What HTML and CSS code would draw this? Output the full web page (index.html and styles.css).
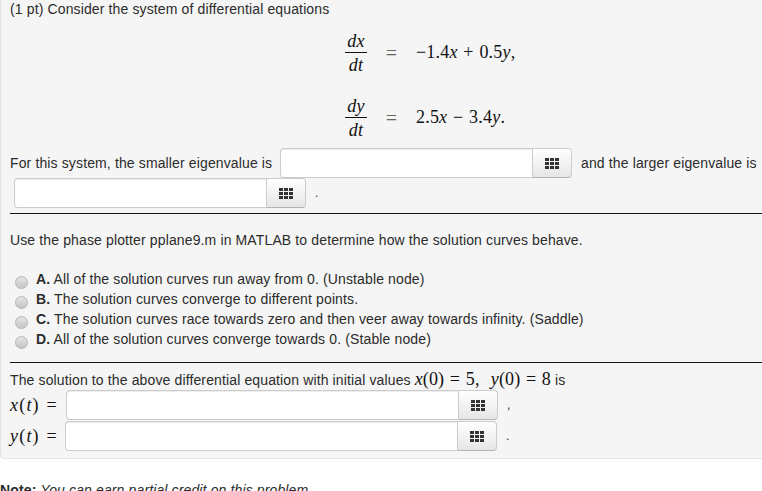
FILE: index.html
```html
<!DOCTYPE html>
<html lang="en">
<head>
    <meta charset="UTF-8">
    <meta name="viewport" content="width=device-width, initial-scale=1.0">
    <title>Problem</title>
    <link rel="stylesheet" href="styles.css">
</head>
<body>
    <div class="problem">
        <div class="line intro">(1 pt) Consider the system of differential equations</div>

        <div class="equations">
            <div class="frac"><span class="num"><i>dx</i></span><span class="den"><i>dt</i></span></div>
            <div class="eq-sign">=</div>
            <div class="eq-rhs">&minus;1.4<i>x</i> + 0.5<i>y</i>,</div>
            <div class="frac"><span class="num"><i>dy</i></span><span class="den"><i>dt</i></span></div>
            <div class="eq-sign">=</div>
            <div class="eq-rhs">2.5<i>x</i> &minus; 3.4<i>y</i>.</div>
        </div>

        <div class="answer-row first-row">
            <span class="answer-label">For this system, the smaller eigenvalue is</span>
            <div class="answer">
                <input type="text">
                <button class="picker"><svg width="14" height="11" viewBox="0 0 14 11"><path d="M0 0h4v3H0zM5 0h4v3H5zM10 0h4v3h-4zM0 4h4v3H0zM5 4h4v3H5zM10 4h4v3h-4zM0 8h4v3H0zM5 8h4v3H5zM10 8h4v3h-4z" fill="#333"/></svg></button>
            </div>
            <span class="after-first">and the larger eigenvalue is</span>
        </div>
        <div class="answer-row second-row">
            <div class="answer">
                <input type="text">
                <button class="picker"><svg width="14" height="11" viewBox="0 0 14 11"><path d="M0 0h4v3H0zM5 0h4v3H5zM10 0h4v3h-4zM0 4h4v3H0zM5 4h4v3H5zM10 4h4v3h-4zM0 8h4v3H0zM5 8h4v3H5zM10 8h4v3h-4z" fill="#333"/></svg></button>
            </div>
            <span class="tail">.</span>
        </div>

        <hr class="rule rule-top">

        <div class="line plotter">Use the phase plotter pplane9.m in MATLAB to determine how the solution curves behave.</div>

        <div class="choices">
            <label class="choice"><input type="radio" name="behave"><span><b>A.</b> All of the solution curves run away from 0. (Unstable node)</span></label>
            <label class="choice"><input type="radio" name="behave"><span><b>B.</b> The solution curves converge to different points.</span></label>
            <label class="choice"><input type="radio" name="behave"><span><b>C.</b> The solution curves race towards zero and then veer away towards infinity. (Saddle)</span></label>
            <label class="choice"><input type="radio" name="behave"><span><b>D.</b> All of the solution curves converge towards 0. (Stable node)</span></label>
        </div>

        <hr class="rule rule-bottom">

        <div class="line solution">The solution to the above differential equation with initial values <span class="math"><i>x</i>(0) = 5, &nbsp;<i>y</i>(0) = 8</span> is</div>

        <div class="answer-row sol-x">
            <span class="math sol-label"><i>x</i>(<i>t</i>) =</span>
            <div class="answer sol">
                <input type="text">
                <button class="picker"><svg width="14" height="11" viewBox="0 0 14 11"><path d="M0 0h4v3H0zM5 0h4v3H5zM10 0h4v3h-4zM0 4h4v3H0zM5 4h4v3H5zM10 4h4v3h-4zM0 8h4v3H0zM5 8h4v3H5zM10 8h4v3h-4z" fill="#333"/></svg></button>
            </div>
            <span class="tail">,</span>
        </div>
        <div class="answer-row sol-y">
            <span class="math sol-label"><i>y</i>(<i>t</i>) =</span>
            <div class="answer sol">
                <input type="text">
                <button class="picker"><svg width="14" height="11" viewBox="0 0 14 11"><path d="M0 0h4v3H0zM5 0h4v3H5zM10 0h4v3h-4zM0 4h4v3H0zM5 4h4v3H5zM10 4h4v3h-4zM0 8h4v3H0zM5 8h4v3H5zM10 8h4v3h-4z" fill="#333"/></svg></button>
            </div>
            <span class="tail">.</span>
        </div>
    </div>

    <p class="note"><b>Note:</b> <i>You can earn partial credit on this problem.</i></p>
</body>
</html>
```

FILE: styles.css
```css
* {
    margin: 0;
    padding: 0;
    box-sizing: border-box;
}

html, body {
    height: 100vh;
    overflow: hidden;
}

body {
    background-color: #fff;
    color: #2b2b2b;
    font-family: "Liberation Sans", Arial, sans-serif;
    font-size: 14px;
    line-height: 20px;
    letter-spacing: 0.13px;
}

.problem {
    height: 460px;
    padding-left: 10px;
    background-color: #f5f5f5;
    border-left: 1px solid #e3e3e3;
    border-bottom: 1px solid #e3e3e3;
    border-bottom-left-radius: 4px;
}

.line {
    margin-left: -1px;
}

.intro {
    margin-top: -1px;
}

/* displayed equations */
.equations {
    display: grid;
    grid-template-columns: 22px 49px auto;
    grid-auto-rows: 65px;
    align-items: center;
    margin: 1px 0 0 334px;
    font-family: "Liberation Serif", "Times New Roman", serif;
    font-size: 18px;
    letter-spacing: 0.2px;
    word-spacing: 1px;
    color: #111;
}

.frac {
    display: flex;
    flex-direction: column;
    align-items: center;
    text-align: center;
}

.num {
    width: 100%;
    padding-bottom: 1px;
    border-bottom: 1px solid #111;
}

.den {
    padding-top: 2px;
}

.eq-sign {
    font-size: 20px;
    text-align: center;
    color: #666;
}

.eq-rhs {
    margin-top: -1px;
}

/* answer boxes */
.answer-row {
    display: flex;
    align-items: center;
    height: 30px;
}

.first-row {
    margin-top: -2px;
}

.answer-label {
    width: 270px;
    margin-left: -1px;
    white-space: nowrap;
}

.after-first {
    margin-left: 9px;
    white-space: nowrap;
}

.second-row {
    margin-left: 3px;
}

.answer {
    display: flex;
    width: 292px;
    height: 30px;
}

.answer.sol {
    width: 432px;
}

.answer input {
    flex: 1;
    min-width: 0;
    height: 30px;
    padding: 4px 12px;
    background-color: #fff;
    border: 1px solid #ccc;
    border-right: none;
    border-radius: 4px 0 0 4px;
    box-shadow: inset 0 1px 1px rgba(0, 0, 0, 0.075);
    outline: none;
}

.picker {
    display: flex;
    align-items: center;
    justify-content: center;
    flex: none;
    width: 40px;
    height: 30px;
    background: linear-gradient(to bottom, #fff, #e6e6e6);
    border: 1px solid #ccc;
    border-bottom-color: #b3b3b3;
    border-radius: 0 4px 4px 0;
}

.tail {
    margin-left: 9px;
    font-size: 12px;
}

.rule {
    height: 0;
    border: none;
    border-top: 1px solid #111;
    margin-left: -1px;
}

.rule-top {
    margin-top: 5px;
}

.plotter {
    margin-top: 16px;
}

/* multiple choice */
.choices {
    margin-top: 19px;
}

.choice {
    display: flex;
    align-items: flex-start;
    margin-left: 3px;
}

.choice input {
    appearance: none;
    flex: none;
    width: 13px;
    height: 13px;
    margin: 7px 8px 0 1px;
    background: linear-gradient(to bottom, #e4e4e4, #c6c6c6);
    border: 1px solid #b5b5b5;
    border-radius: 50%;
}

.rule-bottom {
    margin-top: 13px;
}

.solution {
    margin-top: 6px;
    white-space: nowrap;
}

.math {
    font-family: "Liberation Serif", "Times New Roman", serif;
    font-size: 18px;
    word-spacing: 1px;
    color: #111;
}

.sol-y {
    margin-top: 1px;
}

.sol-label {
    width: 56px;
    margin-left: -1px;
    letter-spacing: 1.2px;
    white-space: nowrap;
}

.sol-y .sol-label {
    width: 55px;
}

.note {
    margin-top: 21px;
    white-space: nowrap;
}
```
